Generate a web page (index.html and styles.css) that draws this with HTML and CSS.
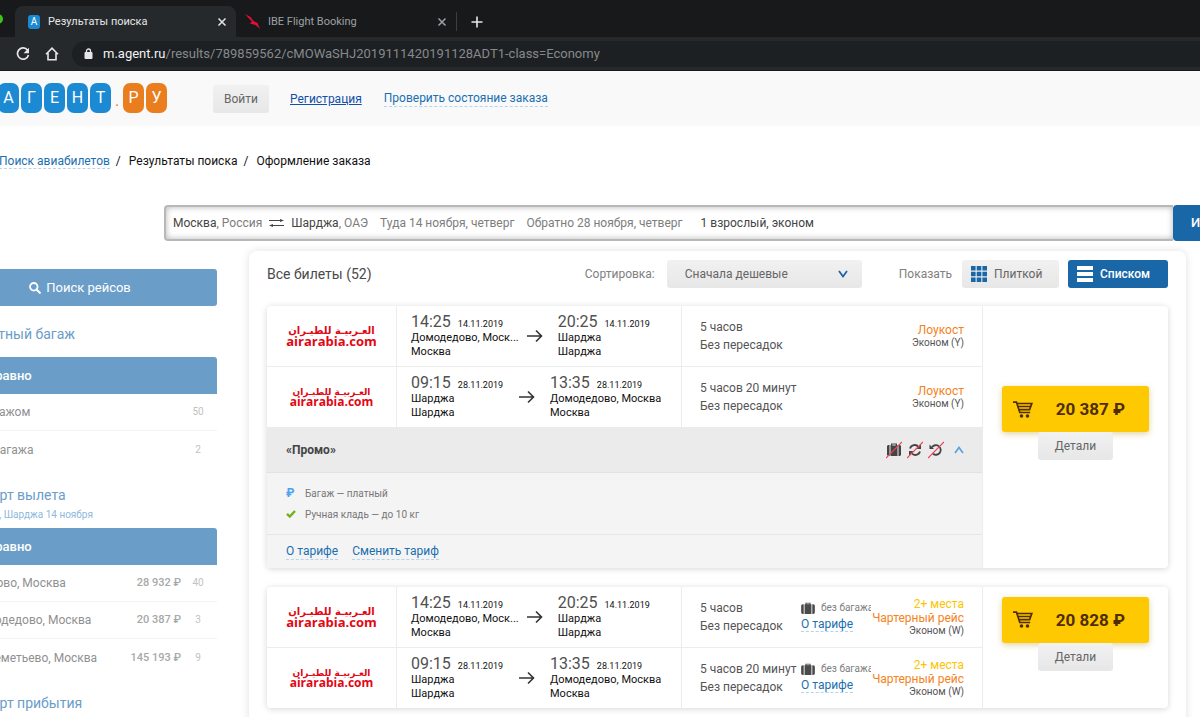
FILE: index.html
```html
<!DOCTYPE html>
<html lang="ru">

<head>
  <meta charset="UTF-8">
  <meta name="viewport" content="width=device-width, initial-scale=1.0">
  <title>Результаты поиска</title>
  <link rel="stylesheet" href="styles.css">
</head>

<body>
  <!-- общие иконки -->
  <svg class="sprite" aria-hidden="true">
    <symbol id="i-close" viewBox="0 0 10 10"><path d="M1.5 1.5l7 7M8.5 1.5l-7 7" fill="none" stroke="currentColor" stroke-width="1.5"/></symbol>
    <symbol id="i-arrow" viewBox="0 0 16 14"><path d="M0 7h14M9 1.5L14.5 7 9 12.5" fill="none" stroke="currentColor" stroke-width="1.6"/></symbol>
    <symbol id="i-case" viewBox="0 0 16 14"><path d="M5 2.5V1h6v1.5M4 2.5h8V14H4zM0 4.5C0 3.5.8 2.5 2 2.5h1V14H2C.8 14 0 13 0 12zM13 2.5h1c1.200 0 2 1 2 2V12c0 1-.8 2-2 2h-1z" fill="currentColor"/><path d="M6.200 2.500V1.800h3.600v.7z" fill="#fff"/></symbol>
    <symbol id="i-cart" viewBox="0 0 20 17"><path d="M0 1.200h3.500l3.300 10.300h10.400M4.200 2.500h14.600L16.600 8.700H6.200M5 5.500h12.500" fill="none" stroke="currentColor" stroke-width="1.700"/><circle cx="8.500" cy="15" r="1.800" fill="currentColor"/><circle cx="14.500" cy="15" r="1.800" fill="currentColor"/></symbol>
  </svg>

  <div class="browser">
    <div class="tabs">
      <span class="window-dot"></span>
      <div class="tab active">
        <span class="favicon">А</span>
        <span class="tab-title">Результаты поиска</span>
        <button class="icon-btn" aria-label="Закрыть"><svg width="10" height="10"><use href="#i-close"/></svg></button>
      </div>
      <div class="tab">
        <svg class="favicon-ibe" width="15" height="15" viewBox="0 0 15 15"><path d="M0 0l5.500 3 3 4 4 2 2.500 6-4.500-4L5 9.500l2-2L3.500 4z" fill="#e0103a"/></svg>
        <span class="tab-title">IBE Flight Booking</span>
        <button class="icon-btn" aria-label="Закрыть"><svg width="10" height="10"><use href="#i-close"/></svg></button>
      </div>
      <button class="icon-btn new-tab" aria-label="Новая вкладка"><svg width="12" height="12" viewBox="0 0 12 12"><path d="M6 .5v11M.5 6h11" stroke="currentColor" stroke-width="1.600"/></svg></button>
    </div>
    <div class="toolbar">
      <button class="icon-btn" aria-label="Обновить"><svg width="14" height="14" viewBox="0 0 14 14"><path d="M11.600 3.200A5.600 5.600 0 1 0 12.500 8" fill="none" stroke="currentColor" stroke-width="1.700"/><path d="M13 .8v5.400H7.600z" fill="currentColor"/></svg></button>
      <button class="icon-btn" aria-label="Домой"><svg width="14" height="14" viewBox="0 0 14 14"><path d="M1 7.200L7 1.200l6 6M3 6v6.800h8V6" fill="none" stroke="currentColor" stroke-width="1.600"/></svg></button>
      <div class="address">
        <svg width="9" height="11" viewBox="0 0 9 11"><rect x="0.500" y="4" width="8" height="7" rx="1" fill="currentColor"/><path d="M2.500 5V3a2 2 0 0 1 4 0v2" fill="none" stroke="currentColor" stroke-width="1.300"/></svg>
        <span class="url"><b>m.agent.ru</b>/results/789859562/cMOWaSHJ2019111420191128ADT1-class=Economy</span>
      </div>
    </div>
  </div>

  <header class="header">
    <a href="#" class="logo" aria-label="Агент.ру">
      <span>А</span><span>Г</span><span>Е</span><span>Н</span><span>Т</span><i>.</i><span class="orange">Р</span><span class="orange">У</span>
    </a>
    <button class="btn login-btn">Войти</button>
    <a href="#" class="register">Регистрация</a>
    <a href="#" class="dashed">Проверить состояние заказа</a>
  </header>

  <main class="page">
    <nav class="breadcrumbs">
      <a href="#" class="dashed">Поиск авиабилетов</a><span>/</span>Результаты поиска<span>/</span>Оформление заказа
    </nav>

    <div class="search-bar">
      <div class="search-summary">
        <span class="city"><b>Москва</b>, Россия</span>
        <svg class="swap" width="15" height="8" viewBox="0 0 15 8"><path d="M0 1.500h13M2 6.500h13" stroke="currentColor" stroke-width="1.200"/><path d="M11 0l4 1.500L11 3zM4 5L0 6.500 4 8z" fill="currentColor"/></svg>
        <span class="city"><b>Шарджа</b>, ОАЭ</span>
        <span class="date">Туда 14 ноября, четверг</span>
        <span class="date">Обратно 28 ноября, четверг</span>
        <b class="pax">1 взрослый, эконом</b>
      </div>
      <button class="change-btn">Изменить</button>
    </div>

    <div class="content">
      <aside class="sidebar">
        <button class="search-flights">
          <svg width="12" height="12" viewBox="0 0 12 12"><circle cx="4.800" cy="4.800" r="3.800" fill="none" stroke="currentColor" stroke-width="1.800"/><path d="M7.500 7.500l4 4" stroke="currentColor" stroke-width="2"/></svg>
          Поиск рейсов
        </button>

        <section class="filter">
          <h3>Бесплатный багаж</h3>
          <ul>
            <li class="selected">Все равно</li>
            <li><span>С багажом</span><em>50</em></li>
            <li><span>Без багажа</span><em>2</em></li>
          </ul>
        </section>

        <section class="filter">
          <h3>Аэропорт вылета</h3>
          <p>Москва, Шарджа 14 ноября</p>
          <ul>
            <li class="selected">Все равно</li>
            <li><span>Внуково, Москва</span><strong>28 932 ₽</strong><em>40</em></li>
            <li><span>Домодедово, Москва</span><strong>20 387 ₽</strong><em>3</em></li>
            <li><span>Шереметьево, Москва</span><strong>145 193 ₽</strong><em>9</em></li>
          </ul>
        </section>

        <section class="filter">
          <h3>Аэропорт прибытия</h3>
        </section>
      </aside>

      <section class="results">
        <div class="results-head">
          <h2>Все билеты (52)</h2>
          <label for="sort">Сортировка:</label>
          <div class="select">
            <select id="sort">
              <option>Сначала дешевые</option>
            </select>
            <svg width="10" height="8" viewBox="0 0 10 8"><path d="M1 1l4 5.500L9 1" fill="none" stroke="#1a67a8" stroke-width="1.800"/></svg>
          </div>
          <span class="show-label">Показать</span>
          <button class="btn view-btn">
            <svg width="16" height="16" viewBox="0 0 16 16"><path d="M0 0h4.600v4.600H0zM5.700 0h4.600v4.600H5.700zM11.400 0H16v4.600h-4.600zM0 5.700h4.600v4.600H0zM5.700 5.700h4.600v4.600H5.700zM11.400 5.700H16v4.600h-4.600zM0 11.400h4.600V16H0zM5.700 11.400h4.600V16H5.700zM11.400 11.400H16V16h-4.600z" fill="#1a67a8"/></svg>
            Плиткой
          </button>
          <button class="btn view-btn current">
            <svg width="16" height="16" viewBox="0 0 16 16"><path d="M0 0h16v4H0zM0 6h16v4H0zM0 12h16v4H0z" fill="#fff"/></svg>
            Списком
          </button>
        </div>

        <article class="ticket">
          <div class="flights">
            <div class="flight">
              <div class="airline"><span class="ar" lang="ar">العـربيـة للطيـران</span><span>airarabia.com</span></div>
              <div class="route">
                <div class="point from"><b>14:25</b><time>14.11.2019</time><p>Домодедово, Моск...</p><p>Москва</p></div>
                <svg width="16" height="14"><use href="#i-arrow"/></svg>
                <div class="point"><b>20:25</b><time>14.11.2019</time><p>Шарджа</p><p>Шарджа</p></div>
              </div>
              <div class="info">
                <div class="duration">5 часов<br>Без пересадок</div>
                <div class="tags"><span class="lowcost">Лоукост</span><span class="class">Эконом (Y)</span></div>
              </div>
            </div>
            <div class="flight">
              <div class="airline small"><span class="ar" lang="ar">العـربيـة للطيـران</span><span>airarabia.com</span></div>
              <div class="route">
                <div class="point from"><b>09:15</b><time>28.11.2019</time><p>Шарджа</p><p>Шарджа</p></div>
                <svg width="16" height="14"><use href="#i-arrow"/></svg>
                <div class="point"><b>13:35</b><time>28.11.2019</time><p>Домодедово, Москва</p><p>Москва</p></div>
              </div>
              <div class="info">
                <div class="duration">5 часов 20 минут<br>Без пересадок</div>
                <div class="tags"><span class="lowcost">Лоукост</span><span class="class">Эконом (Y)</span></div>
              </div>
            </div>

            <div class="tariff-head">
              <strong>«Промо»</strong>
              <svg width="16" height="18" viewBox="0 0 16 18"><path d="M5 4V2.500h6V4h3l1 1v9l-1 1H2l-1-1V5l1-1z" fill="#444"/><path d="M4 4v11M12 4v11" stroke="#ebebeb"/><path d="M6.300 4h3.400" stroke="#ebebeb"/><path d="M0 17L16 1" stroke="#e8455c" stroke-width="1.200"/></svg>
              <svg width="16" height="18" viewBox="0 0 16 18"><path d="M3 7.500a4.800 4.800 0 0 1 8.500-1.500M13 10.500a4.800 4.800 0 0 1-8.500 1.500" fill="none" stroke="#444" stroke-width="1.800"/><path d="M14 3.500v4.500H9.500zM2 14.500v-4.500h4.500z" fill="#444"/><path d="M0 17L16 1" stroke="#e8455c" stroke-width="1.200"/></svg>
              <svg width="16" height="18" viewBox="0 0 16 18"><path d="M4 6.200A4.800 4.800 0 1 1 5 12.800" fill="none" stroke="#444" stroke-width="1.800"/><path d="M1.500 3.500v4.500H6z" fill="#444"/><path d="M0 17L16 1" stroke="#e8455c" stroke-width="1.200"/></svg>
              <button class="icon-btn collapse" aria-label="Свернуть"><svg width="10" height="8" viewBox="0 0 10 8"><path d="M1 7l4-5.500L9 7" fill="none" stroke="#5aa4e2" stroke-width="1.700"/></svg></button>
            </div>
            <ul class="tariff-list">
              <li><span class="rub">₽</span>Багаж — платный</li>
              <li><span><svg width="10" height="8" viewBox="0 0 10 8"><path d="M1 3.800l2.800 2.700L9 1" fill="none" stroke="#6fb21c" stroke-width="2.400"/></svg></span>Ручная кладь — до 10 кг</li>
            </ul>
            <div class="tariff-links">
              <a href="#" class="dashed">О тарифе</a>
              <a href="#" class="dashed">Сменить тариф</a>
            </div>
          </div>
          <div class="price">
            <button class="buy-btn"><svg width="20" height="17"><use href="#i-cart"/></svg><span>20 387 ₽</span></button>
            <button class="btn details-btn">Детали</button>
          </div>
        </article>

        <article class="ticket">
          <div class="flights">
            <div class="flight">
              <div class="airline"><span class="ar" lang="ar">العـربيـة للطيـران</span><span>airarabia.com</span></div>
              <div class="route">
                <div class="point from"><b>14:25</b><time>14.11.2019</time><p>Домодедово, Моск...</p><p>Москва</p></div>
                <svg width="16" height="14"><use href="#i-arrow"/></svg>
                <div class="point"><b>20:25</b><time>14.11.2019</time><p>Шарджа</p><p>Шарджа</p></div>
              </div>
              <div class="info">
                <div class="duration">5 часов<br>Без пересадок</div>
                <div class="baggage"><p><svg width="14" height="12"><use href="#i-case"/></svg>без багажа</p><a href="#" class="dashed">О тарифе</a></div>
                <div class="tags"><span class="seats">2+ места</span><span class="lowcost">Чартерный рейс</span><span class="class">Эконом (W)</span></div>
              </div>
            </div>
            <div class="flight">
              <div class="airline small"><span class="ar" lang="ar">العـربيـة للطيـران</span><span>airarabia.com</span></div>
              <div class="route">
                <div class="point from"><b>09:15</b><time>28.11.2019</time><p>Шарджа</p><p>Шарджа</p></div>
                <svg width="16" height="14"><use href="#i-arrow"/></svg>
                <div class="point"><b>13:35</b><time>28.11.2019</time><p>Домодедово, Москва</p><p>Москва</p></div>
              </div>
              <div class="info">
                <div class="duration">5 часов 20 минут<br>Без пересадок</div>
                <div class="baggage"><p><svg width="14" height="12"><use href="#i-case"/></svg>без багажа</p><a href="#" class="dashed">О тарифе</a></div>
                <div class="tags"><span class="seats">2+ места</span><span class="lowcost">Чартерный рейс</span><span class="class">Эконом (W)</span></div>
              </div>
            </div>
          </div>
          <div class="price">
            <button class="buy-btn"><svg width="20" height="17"><use href="#i-cart"/></svg><span>20 828 ₽</span></button>
            <button class="btn details-btn">Детали</button>
          </div>
        </article>
      </section>
    </div>
  </main>
</body>

</html>
```
FILE: styles.css
```css
* {
  margin: 0;
  padding: 0;
  box-sizing: border-box;
}

body {
  min-height: 100vh;
  display: flex;
  flex-direction: column;
  overflow-x: hidden;
  background-color: #fff;
  color: #111;
  font-family: Roboto, "Liberation Sans", sans-serif;
  font-size: 12px;
  line-height: 18px;
}

button,
select {
  font: inherit;
  border: none;
  cursor: pointer;
}

ul {
  list-style: none;
}

b {
  font-weight: 400;
}

svg {
  flex: none;
}

.sprite {
  position: absolute;
  width: 0;
  height: 0;
}

.dashed {
  color: #1a6fb0;
  text-decoration: none;
  border-bottom: 1px dashed #b5d3ea;
  line-height: 15px;
}

.btn {
  height: 28px;
  border-radius: 3px;
  background: linear-gradient(#f1f1f1, #e7e7e7);
  color: #666;
}

.icon-btn {
  display: flex;
  background: none;
  color: inherit;
}

/* окно браузера */
.browser {
  background-color: #26292b;
  color: #e4e6e8;
  border-bottom: 1px solid #17191a;
}

.tabs {
  display: flex;
  align-items: center;
  height: 37px;
  padding-top: 6px;
  background-color: #18191b;
}

.window-dot {
  width: 10px;
  height: 10px;
  margin: 0 12px 6px -7px;
  border-radius: 50%;
  background-color: #3fc31b;
}

.tab {
  display: flex;
  align-items: center;
  gap: 8px;
  width: 221px;
  height: 31px;
  padding: 0 9px;
  color: #9da1a5;
  font-size: 11px;
}

.tab.active {
  padding-left: 13px;
  border-radius: 8px 8px 0 0;
  background-color: #26292b;
  color: #e4e6e8;
}

.tab:not(.active) {
  border-right: 1px solid #3c3e40;
  height: 19px;
}

.tab-title {
  flex: 1;
}

.favicon {
  width: 12px;
  height: 14px;
  border-radius: 3px;
  background-color: #1b8ad3;
  color: #fff;
  font-size: 10px;
  line-height: 14px;
  text-align: center;
}

.new-tab {
  margin-left: 14px;
}

.toolbar {
  display: flex;
  align-items: center;
  gap: 15px;
  height: 33px;
  padding-left: 16px;
}

.address {
  flex: 1;
  display: flex;
  align-items: center;
  gap: 10px;
  height: 26px;
  margin-left: -2px;
  padding-left: 12px;
  border-radius: 13px 0 0 13px;
  background-color: #1d2023;
}

.url {
  color: #85898c;
  font-size: 13px;
}

.url b {
  color: #f0f1f2;
}

/* шапка */
.header {
  display: flex;
  align-items: center;
  height: 55px;
  background-color: #f9f9f9;
}

.logo {
  display: flex;
  gap: 2px;
  margin: 0 46px 2px -2px;
  text-decoration: none;
}

.logo span {
  width: 21px;
  height: 30px;
  border-radius: 7px;
  background-color: #1b8ad3;
  color: #fff;
  font-size: 16px;
  line-height: 30px;
  text-align: center;
}

.logo i {
  align-self: flex-end;
  width: 8px;
  color: #ea7d1e;
  font-size: 16px;
  font-style: normal;
  line-height: 24px;
  text-align: center;
}

.logo .orange {
  background-color: #ea7d1e;
}

.login-btn {
  width: 56px;
  margin-right: 21px;
}

.register {
  margin-right: 22px;
  color: #1350a8;
}

/* левый край страницы уходит за окно */
.page {
  flex: 1;
  display: flex;
  flex-direction: column;
  margin-left: -57px;
}

.breadcrumbs {
  padding: 26px 0 26px 56px;
}

.breadcrumbs span {
  margin: 0 8px 0 6px;
}

.search-bar {
  display: flex;
  height: 36px;
  margin: 9px -70px 0 221px;
}

.search-summary {
  flex: 1;
  display: flex;
  align-items: center;
  padding-left: 7px;
  border: 2px solid #b8b8b8;
  border-right: none;
  border-radius: 4px 0 0 4px;
  box-shadow: inset 0 0 6px rgba(0, 0, 0, 0.3);
  color: #7d7d7d;
}

.search-summary b {
  color: #444;
}

.swap {
  margin: 0 7px;
  color: #444;
}

.date {
  margin-left: 12px;
}

.pax {
  margin-left: 18px;
}

.change-btn {
  width: 97px;
  border-radius: 4px;
  background-color: #1a67a8;
  color: #fff;
  font-size: 13px;
  font-weight: 500;
}

.content {
  flex: 1;
  display: flex;
  gap: 32px;
  margin-top: 10px;
  padding-right: 14px;
}

/* фильтры */
.sidebar {
  flex: none;
  width: 274px;
  padding-top: 18px;
}

.search-flights {
  display: flex;
  align-items: center;
  justify-content: center;
  gap: 5px;
  width: 100%;
  height: 37px;
  margin-bottom: 18px;
  border-radius: 3px;
  background-color: #6a9dc8;
  color: #fff;
  font-size: 13px;
}

.filter {
  margin-bottom: 17px;
}

.filter h3 {
  padding-left: 8px;
  margin-bottom: 13px;
  color: #6a9dc8;
  font-size: 14px;
  font-weight: 400;
  line-height: 20px;
}

.filter p {
  margin: -12px 0 4px;
  padding-left: 20px;
  color: #8fb9dc;
  font-size: 10px;
}

.filter li {
  display: flex;
  align-items: center;
  height: 37px;
  padding: 0 7px 0 27px;
  border-bottom: 1px solid #f3f3f3;
  color: #909090;
}

.filter li:last-child {
  border-bottom: none;
}

.filter li.selected {
  border: none;
  border-radius: 3px 3px 0 0;
  background-color: #6a9dc8;
  color: #fff;
  font-size: 13px;
  font-weight: 500;
}

.filter li span {
  flex: 1;
}

.filter li strong {
  color: #a8a8a8;
  font-size: 11px;
  font-weight: 500;
}

.filter li em {
  width: 24px;
  margin-left: 5px;
  color: #c2c2c2;
  font-size: 10px;
  font-style: normal;
  text-align: center;
}

/* список билетов */
.results {
  flex: 1;
  padding: 9px 18px 10px;
  border-radius: 8px 8px 0 0;
  box-shadow: 0 0 8px rgba(0, 0, 0, 0.12);
}

.results-head {
  display: flex;
  align-items: center;
  margin-bottom: 18px;
  color: #808080;
}

.results-head h2 {
  flex: 1;
  color: #4a4a4a;
  font-size: 14px;
  font-weight: 400;
}

.select {
  position: relative;
  width: 195px;
  margin: 0 37px 0 12px;
}

.select select {
  display: block;
  width: 100%;
  height: 28px;
  padding-left: 18px;
  border-radius: 3px;
  background: linear-gradient(#f1f1f1, #e7e7e7);
  color: #666;
  appearance: none;
}

.select svg {
  position: absolute;
  top: 10px;
  right: 14px;
  pointer-events: none;
}

.show-label {
  margin-right: 10px;
}

.view-btn {
  display: flex;
  align-items: center;
  gap: 7px;
  width: 97px;
  padding-left: 9px;
}

.view-btn.current {
  width: 100px;
  margin-left: 9px;
  background: #1a67a8;
  color: #fff;
  font-weight: 500;
}

.ticket {
  display: flex;
  margin-bottom: 19px;
  border-radius: 4px;
  box-shadow: 0 1px 6px rgba(0, 0, 0, 0.16);
}

.ticket:last-child {
  margin-bottom: 0;
}

.flights {
  flex: 1;
  border-right: 1px solid #ececec;
}

.flight {
  display: grid;
  grid-template-columns: 129px 286px 1fr;
  height: 60px;
}

.flight:first-child {
  height: 61px;
  border-bottom: 1px solid #ececec;
}

.airline {
  display: flex;
  flex-direction: column;
  align-items: center;
  justify-content: center;
  color: #e30613;
  font-family: "Open Sans", "Noto Sans", sans-serif;
  font-size: 13px;
  font-weight: 700;
  line-height: 10px;
  white-space: nowrap;
}

.airline .ar {
  font-family: "DejaVu Sans", sans-serif;
  font-size: 10px;
}

.airline.small {
  font-size: 12px;
}

.airline.small .ar {
  font-size: 9px;
}

.route {
  display: flex;
  align-items: center;
  padding-left: 14px;
  border-left: 1px solid #ececec;
  border-right: 1px solid #ececec;
}

.route svg {
  margin: 0 15px 0 8px;
  color: #333;
}

.point {
  font-size: 11px;
  line-height: 14px;
  white-space: nowrap;
}

.point.from {
  min-width: 100px;
}

.point b {
  color: #505050;
  font-size: 16px;
  line-height: 16px;
}

.point time {
  margin-left: 7px;
  font-size: 9px;
}

.info {
  display: flex;
  align-items: center;
  padding: 0 18px;
  color: #555;
}

.duration {
  width: 101px;
  white-space: nowrap;
}

.baggage {
  width: 70px;
  overflow: hidden;
  white-space: nowrap;
}

.baggage p {
  display: flex;
  align-items: center;
  gap: 6px;
  height: 14px;
  color: #808080;
  font-size: 10px;
}

.baggage svg {
  color: #4a4a4a;
}

.tags {
  flex: 1;
  display: flex;
  flex-direction: column;
  align-items: flex-end;
  line-height: 14px;
  white-space: nowrap;
}

.lowcost {
  color: #f58220;
}

.seats {
  color: #fdc400;
}

.class {
  font-size: 10px;
  line-height: 12px;
}

/* тариф */
.tariff-head {
  display: flex;
  align-items: center;
  gap: 5px;
  height: 46px;
  padding: 0 18px 0 19px;
  border-bottom: 1px solid #e2e2e2;
  background-color: #ebebeb;
  color: #444;
}

.tariff-head strong {
  flex: 1;
}

.collapse {
  margin-left: 5px;
}

.tariff-list {
  height: 62px;
  padding: 10px 19px;
  border-bottom: 1px solid #e6e6e6;
  background-color: #f4f4f4;
  color: #777;
  font-size: 10px;
  line-height: 21px;
}

.tariff-list li {
  display: flex;
}

.tariff-list span {
  width: 19px;
}

.tariff-list .rub {
  color: #4ba3f0;
  font-size: 12px;
  font-weight: 700;
}

.tariff-links {
  display: flex;
  align-items: center;
  gap: 14px;
  height: 33px;
  padding-left: 19px;
  border-radius: 0 0 0 4px;
  background-color: #f4f4f4;
}

/* цена */
.price {
  display: flex;
  flex-direction: column;
  align-items: center;
  justify-content: center;
  width: 185px;
  padding-bottom: 28px;
}

.buy-btn {
  display: flex;
  align-items: center;
  width: 147px;
  height: 46px;
  padding: 0 24px 0 11px;
  border-radius: 3px;
  background-color: #fec900;
  box-shadow: 0 2px 6px rgba(180, 150, 30, 0.4);
  color: #4f2d06;
  font-size: 17px;
  font-weight: 700;
}

.buy-btn span {
  flex: 1;
  text-align: right;
}

.details-btn {
  width: 75px;
}
```
